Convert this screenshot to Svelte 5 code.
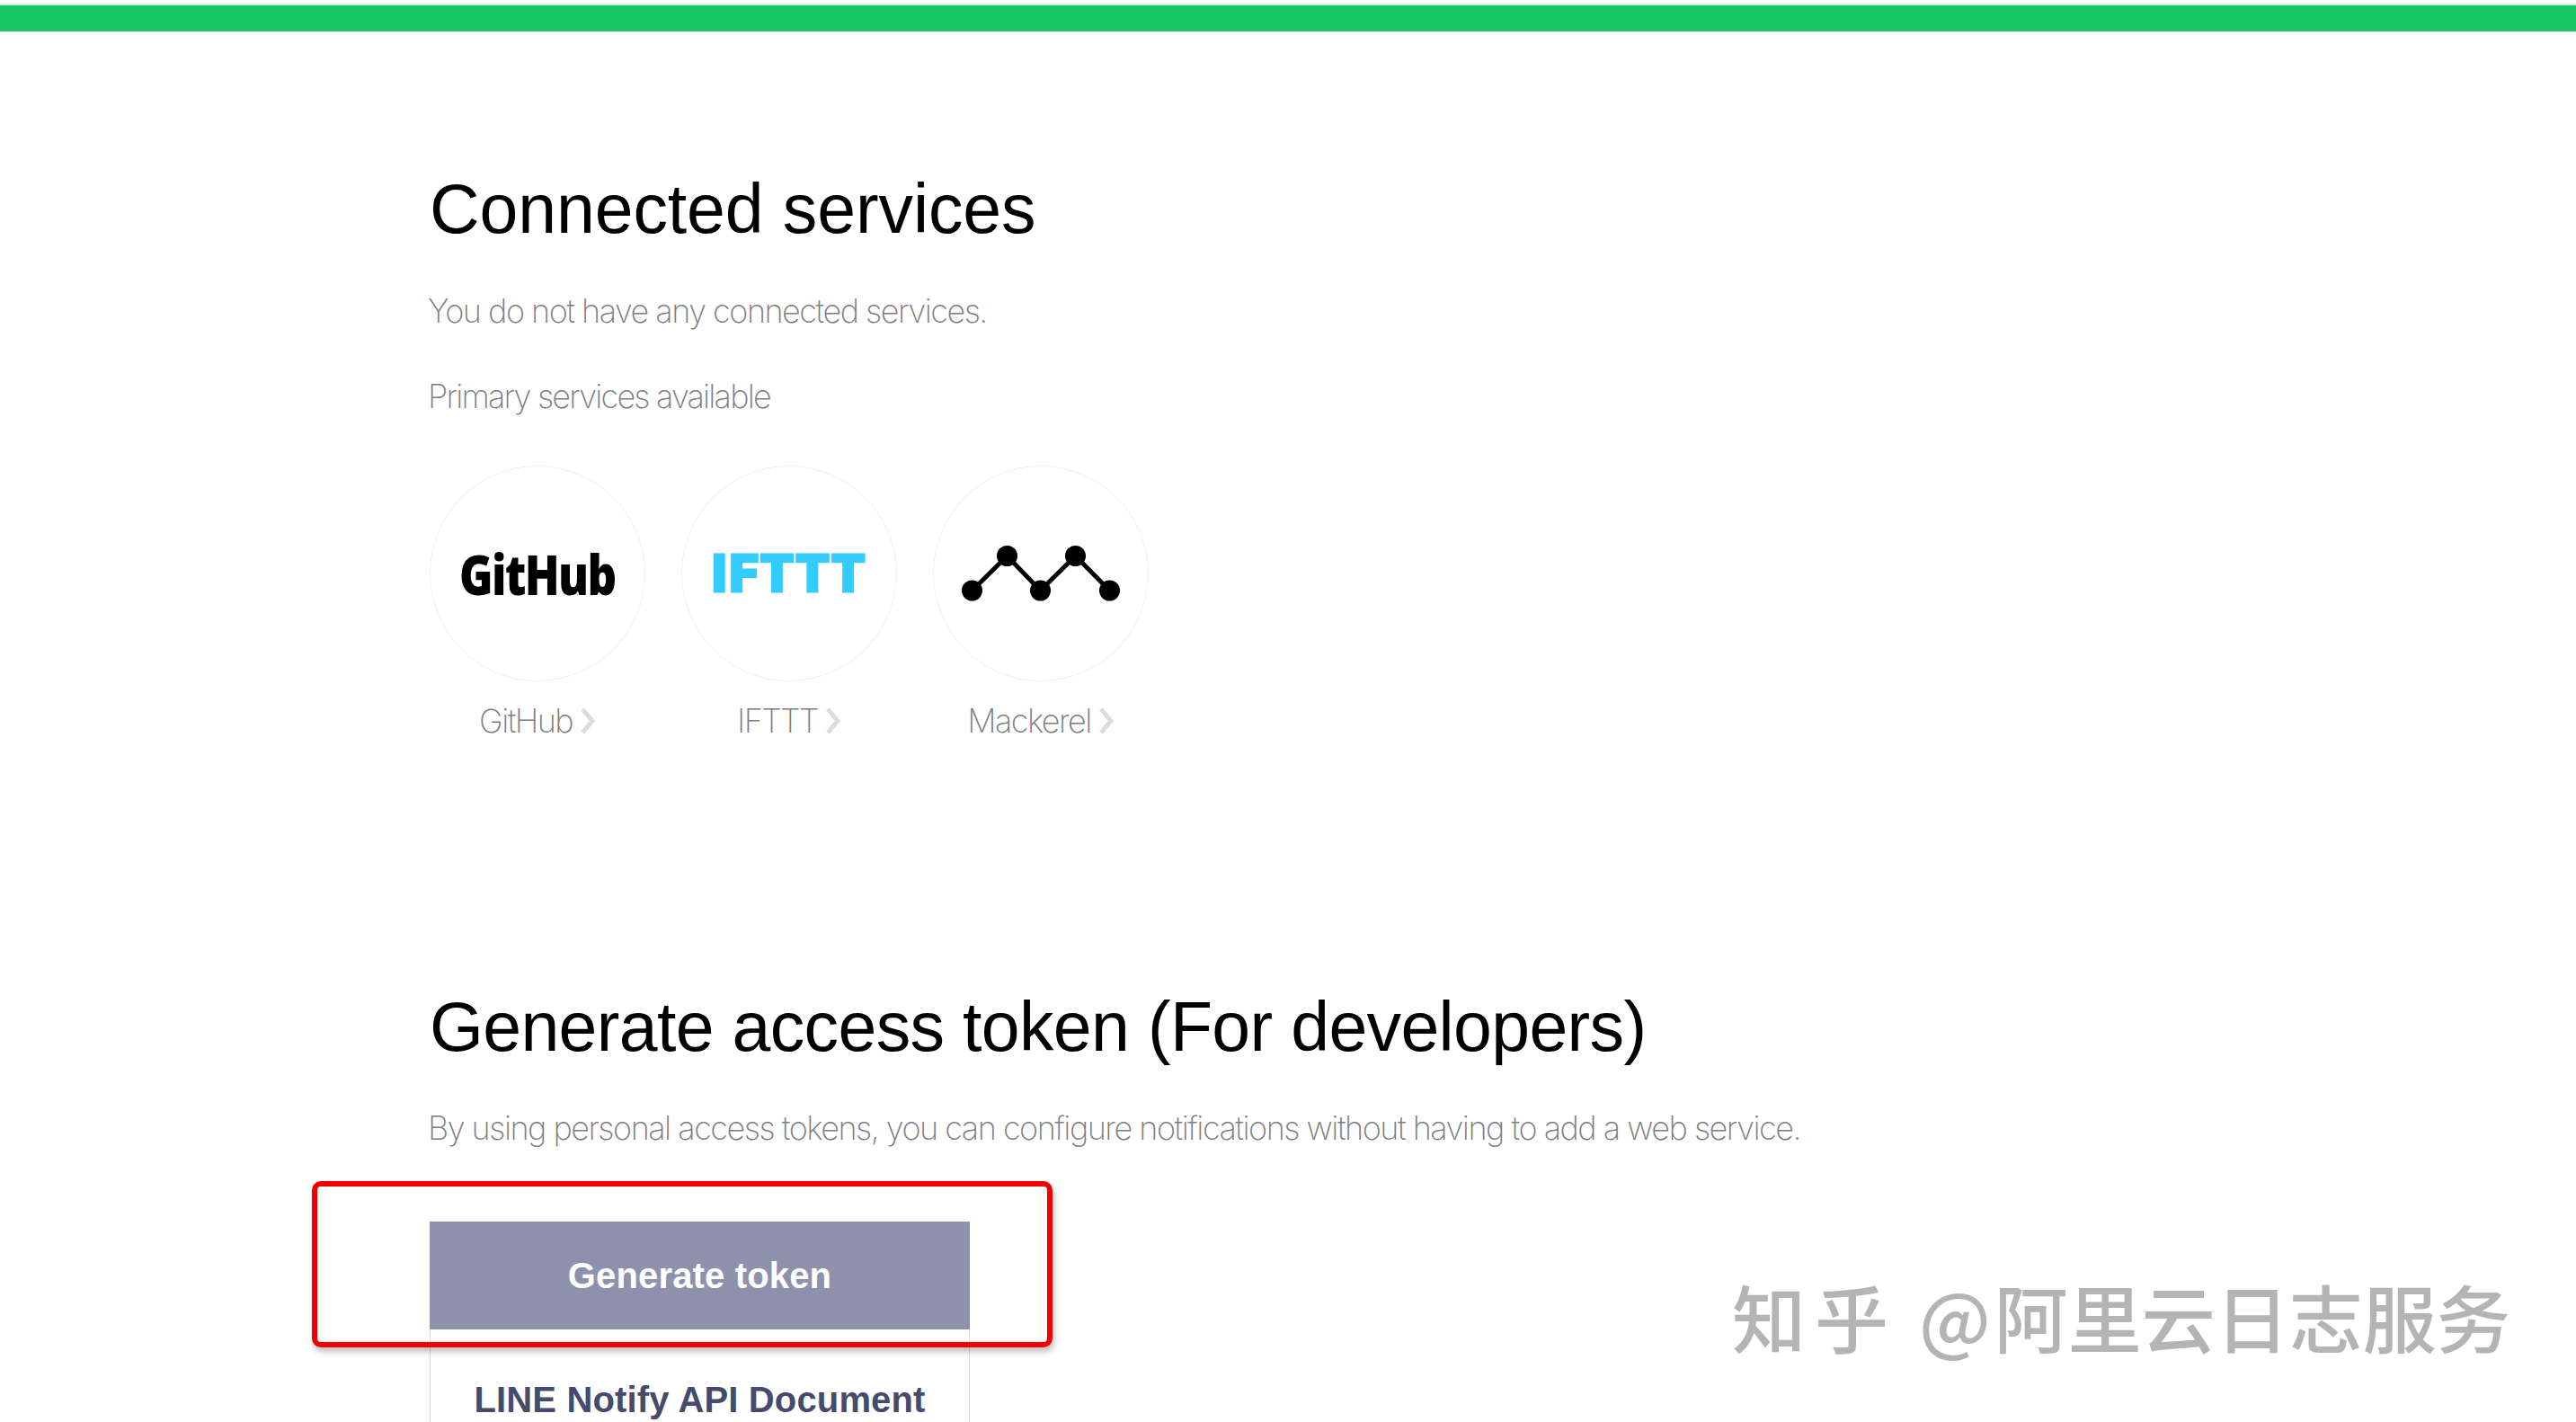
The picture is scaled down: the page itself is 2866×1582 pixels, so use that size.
<script lang="ts">
	type Service = { name: string; logo: 'github' | 'ifttt' | 'mackerel' };
	const services: Service[] = [
		{ name: 'GitHub', logo: 'github' },
		{ name: 'IFTTT', logo: 'ifttt' },
		{ name: 'Mackerel', logo: 'mackerel' }
	];
	const dots = [
		[11.5, 50],
		[50.5, 11.5],
		[87.5, 50],
		[126.5, 11.5],
		[164.5, 50]
	];
</script>

<div class="page">
	<div class="topbar"></div>

	<main class="content">
		<section class="connected">
			<h2>Connected services</h2>
			<p class="empty">You do not have any connected services.</p>
			<p class="primary">Primary services available</p>
			<ul class="services">
				{#each services as service}
					<li class="service">
						<div class="circle">
							{#if service.logo === 'github'}
								<span class="logo-github">GitHub</span>
							{:else if service.logo === 'ifttt'}
								<span class="logo-ifttt">IFTTT</span>
							{:else}
								<svg class="logo-mackerel" width="176" height="62" viewBox="0 0 176 62">
									<polyline
										points={dots.map((d) => d.join(',')).join(' ')}
										fill="none"
										stroke="#000"
										stroke-width="5"
									/>
									{#each dots as [cx, cy]}
										<circle {cx} {cy} r="11.5" fill="#000" />
									{/each}
								</svg>
							{/if}
						</div>
						<span class="service-label">
							{service.name}
							<svg width="18" height="28" viewBox="0 0 18 28">
								<polyline points="3,1 14,14 3,27" fill="none" stroke="#dcdcdc" stroke-width="5" />
							</svg>
						</span>
					</li>
				{/each}
			</ul>
		</section>

		<section class="token">
			<h2>Generate access token (For developers)</h2>
			<p class="desc">By using personal access tokens, you can configure notifications without having to add a web service.</p>
			<button class="btn btn-generate">Generate token</button>
			<button class="btn btn-doc">LINE Notify API Document</button>
		</section>
	</main>

	<div class="highlight"></div>
	<div class="watermark"><span class="brand">知乎</span><span class="at">@</span>阿里云日志服务</div>
</div>

<style>
	:global(body) {
		margin: 0;
		background: #fff;
	}

	.page {
		position: relative;
		height: 1582px;
		overflow: hidden;
		background: #fff;
		font-family: 'Liberation Sans', Arial, sans-serif;
	}

	.topbar {
		margin-top: 4px;
		height: 29px;
		background: #19c564;
		border-top: 2px solid #d0efdd;
	}

	.content {
		padding-left: 478px;
	}

	h2 {
		margin: 0;
		font-size: 77px;
		line-height: 84px;
		font-weight: 400;
		color: #000;
	}

	p {
		margin: 0 0 0 -2px;
		font-family: Inter, 'Liberation Sans', sans-serif;
		font-weight: 200;
		font-size: 36px;
		line-height: 44px;
		color: #7d7d82;
		letter-spacing: -1.5px;
	}

	.connected {
		padding-top: 155px;
	}

	.connected h2 {
		letter-spacing: -0.1px;
	}

	.empty {
		margin-top: 50px;
	}

	.primary {
		margin-top: 51px;
		letter-spacing: -1.8px;
	}

	.services {
		display: flex;
		gap: 40px;
		margin: 55px 0 0;
		padding: 0;
		list-style: none;
	}

	.service {
		display: flex;
		flex-direction: column;
		align-items: center;
		width: 240px;
	}

	.circle {
		box-sizing: border-box;
		display: flex;
		align-items: center;
		justify-content: center;
		width: 240px;
		height: 240px;
		border: 1px solid #efefef;
		border-radius: 50%;
	}

	.logo-github {
		font-family: 'Open Sans', sans-serif;
		font-weight: 800;
		font-size: 62px;
		line-height: 1;
		color: #000;
		letter-spacing: -2px;
		transform: scaleX(0.82);
	}

	.logo-ifttt {
		font-family: Roboto, sans-serif;
		font-weight: 900;
		font-size: 58px;
		line-height: 1;
		color: #33ccff;
		letter-spacing: 2.5px;
		-webkit-text-stroke: 3px #33ccff;
	}

	.logo-mackerel {
		display: block;
		margin-left: -1px;
	}

	.service-label {
		display: inline-flex;
		align-items: center;
		gap: 8px;
		margin-top: 22px;
		font-family: Inter, 'Liberation Sans', sans-serif;
		font-weight: 200;
		font-size: 36px;
		line-height: 44px;
		color: #7d7d82;
		letter-spacing: -1.6px;
	}

	.token {
		padding-top: 276px;
	}

	.token h2 {
		letter-spacing: -0.65px;
	}

	.desc {
		margin-top: 49px;
	}

	.btn {
		display: block;
		box-sizing: border-box;
		width: 601px;
		padding: 0;
		font-family: 'Liberation Sans', Arial, sans-serif;
		font-weight: 700;
		font-size: 40px;
		letter-spacing: 0.15px;
		text-align: center;
	}

	.btn-generate {
		height: 120px;
		margin-top: 82px;
		border: 0;
		background: #8e91ab;
		color: #fff;
	}

	.btn-doc {
		height: 158px;
		border: 1px solid #dcdcdc;
		border-top: 0;
		background: #fff;
		color: #454b6d;
	}

	.highlight {
		position: absolute;
		left: 347px;
		top: 1314px;
		box-sizing: border-box;
		width: 824px;
		height: 185px;
		border: 6px solid #f00000;
		border-radius: 10px;
		box-shadow: 2px 5px 7px rgba(0, 0, 0, 0.25);
	}

	.watermark {
		position: absolute;
		left: 1927px;
		top: 1412px;
		font-family: 'Noto Sans CJK SC', sans-serif;
		font-weight: 500;
		font-size: 82px;
		line-height: 104px;
		color: #b4b4b4;
		white-space: nowrap;
	}

	.brand {
		letter-spacing: 10px;
	}

	.at {
		margin: 0 4px 0 24px;
	}
</style>
